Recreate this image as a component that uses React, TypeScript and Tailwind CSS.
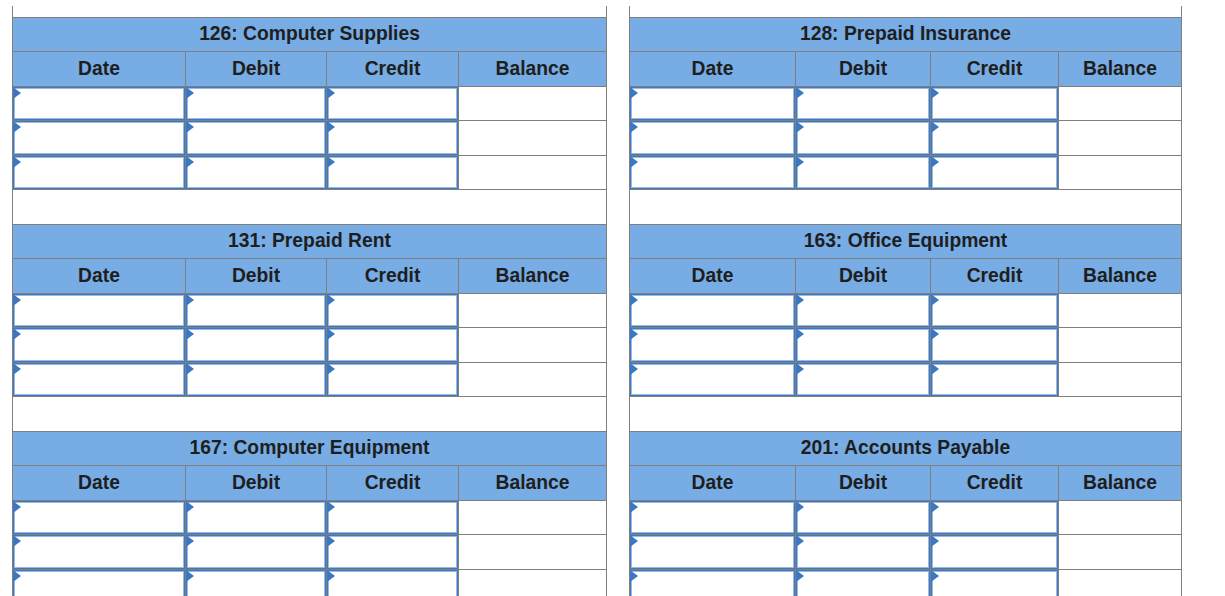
import React from "react";

type Cols = [number, number, number, number];

const LEFT_COLS: Cols = [173, 141, 132, 148];
const RIGHT_COLS: Cols = [166, 135, 128, 123];

const LEFT = ["126: Computer Supplies", "131: Prepaid Rent", "167: Computer Equipment"];
const RIGHT = ["128: Prepaid Insurance", "163: Office Equipment", "201: Accounts Payable"];

function InputBox() {
  return (
    <div className="relative w-full h-full bg-white border border-[#4677b8] shadow-[inset_0_0_0_1px_#93bbe8]">
      <div className="absolute left-[-1px] top-[-1px] w-0 h-0 border-l-[8px] border-l-[#3a78c3] border-y-[6px] border-y-transparent" />
    </div>
  );
}

function Section({ title, cols, last }: { title: string; cols: Cols; last: boolean }) {
  const heights = ["h-[34px]", "h-[35px]", "h-[34px]"];
  return (
    <>
      <div className="h-[34px] flex items-center justify-center bg-[#77ace4] border-b border-r border-[#7f7f7f] text-[19.3px] font-bold text-[#1e1e1e]">
        {title}
      </div>
      <div className="h-[35px] flex bg-[#77ace4] border-b border-[#7f7f7f] text-[19.3px] font-bold text-[#1e1e1e]">
        {["Date", "Debit", "Credit", "Balance"].map((h, i) => (
          <div
            key={h}
            style={{ width: cols[i] }}
            className="flex items-center justify-center border-r border-[#7f7f7f] shrink-0"
          >
            {h}
          </div>
        ))}
      </div>
      {heights.map((hc, r) => (
        <div key={r} className={`${hc} flex border-b border-[#7f7f7f]`}>
          {[0, 1, 2, 3].map((i) => (
            <div key={i} style={{ width: cols[i] }} className="border-r border-[#7f7f7f] shrink-0 bg-white">
              {i < 3 ? <InputBox /> : null}
            </div>
          ))}
        </div>
      ))}
      {!last && <div className="h-[35px] border-b border-r border-[#7f7f7f] bg-white" />}
    </>
  );
}

function Ledger({ titles, cols, width }: { titles: string[]; cols: Cols; width: string }) {
  return (
    <div className={`${width} border-l border-[#7f7f7f] flex flex-col shrink-0`}>
      <div className="h-[12px] border-b border-r border-[#7f7f7f]" />
      {titles.map((t, i) => (
        <Section key={t} title={t} cols={cols} last={i === titles.length - 1} />
      ))}
    </div>
  );
}

export default function App() {
  return (
    <div className="w-[1225px] h-[596px] overflow-hidden bg-white font-['Liberation_Sans',Arial,sans-serif]">
      <div className="flex pt-[6px] pl-[12px] gap-[22px]">
        <Ledger titles={LEFT} cols={LEFT_COLS} width="w-[595px]" />
        <Ledger titles={RIGHT} cols={RIGHT_COLS} width="w-[553px]" />
      </div>
    </div>
  );
}
